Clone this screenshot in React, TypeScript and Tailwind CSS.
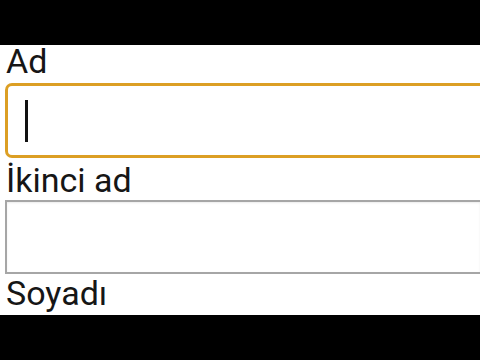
import React from "react";

export default function App() {
  return (
    <div className="w-[480px] h-[360px] bg-black overflow-hidden flex flex-col">
      <div className="h-[45px] shrink-0" />
      <div
        className="h-[270px] shrink-0 bg-white flex flex-col text-[#161616]"
        style={{ fontFamily: "Roboto, 'Noto Sans', sans-serif" }}
      >
        <div className="h-[32px] leading-[32px] text-[34px] pl-[6px] mb-[6px]">Ad</div>
        <div className="ml-[5px] w-[475px] h-[75px] shrink-0 border-[3.5px] border-r-0 border-[#dc9f24] rounded-l-[7px] relative">
          <div className="absolute left-[17px] top-[14px] w-[2.5px] h-[42px] bg-[#111]" />
        </div>
        <div className="h-[36px] leading-[36px] text-[34px] pl-[6px] mt-[4px] mb-[2px]">İkinci ad</div>
        <div className="ml-[5px] w-[475px] h-[74px] shrink-0 border-[2px] border-r-0 border-[#a6a6a6] shadow-[inset_0_1px_2px_rgba(0,0,0,0.08)]" />
        <div className="h-[36px] leading-[36px] text-[34px] pl-[6px] mt-[1px]">Soyadı</div>
      </div>
      <div className="flex-1" />
    </div>
  );
}
